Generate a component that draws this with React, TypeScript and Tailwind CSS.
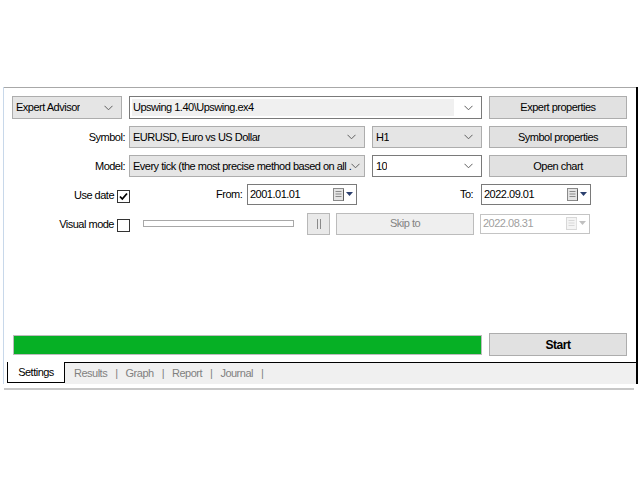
import React from 'react';

const font = "font-['Liberation_Sans',Arial,sans-serif]";

function Chevron() {
  return (
    <svg width="9" height="6" viewBox="0 0 9 6" className="shrink-0">
      <polyline points="0.5,0.8 4.5,4.8 8.5,0.8" fill="none" stroke="#606060" strokeWidth="1" />
    </svg>
  );
}

function CalendarIcon({ disabled }: { disabled?: boolean }) {
  const body = disabled ? '#d8d8d8' : '#8a8a8a';
  const arrow = disabled ? '#c0c0c0' : '#2b3f6e';
  return (
    <svg width="22" height="13" viewBox="0 0 22 13" className="shrink-0">
      <rect x="1.5" y="0.5" width="10" height="12" fill={disabled ? '#f4f4f4' : '#e4e4e4'} stroke={body} />
      <line x1="3.5" y1="3.5" x2="9.5" y2="3.5" stroke={body} />
      <line x1="3.5" y1="6" x2="9.5" y2="6" stroke={body} />
      <line x1="3.5" y1="8.5" x2="9.5" y2="8.5" stroke={body} />
      <line x1="11.5" y1="1.5" x2="11.5" y2="12.5" stroke={disabled ? '#e0e0e0' : '#5a5a5a'} />
      <polygon points="14,4 21,4 17.5,8" fill={arrow} />
    </svg>
  );
}

function Combo({ value, width, white }: { value: string; width: string; white?: boolean }) {
  return (
    <div
      className={`${width} h-full flex items-center justify-between pl-[3px] pr-[8px] border overflow-hidden ${
        white ? 'bg-white border-[#7a7a7a]' : 'bg-[#e5e5e5] border-[#adadad]'
      }`}
    >
      <span className="whitespace-nowrap overflow-hidden">{value}</span>
      <Chevron />
    </div>
  );
}

function Button({ label, width, bold }: { label: string; width: string; bold?: boolean }) {
  return (
    <div className={`${width} h-full flex items-center justify-center bg-[#e1e1e1] border border-[#adadad] ${bold ? 'font-bold text-[12px]' : ''}`}>
      {label}
    </div>
  );
}

function DateField({ value, disabled }: { value: string; disabled?: boolean }) {
  return (
    <div
      className={`w-[110px] h-full flex items-center justify-between pl-[2px] pr-[2px] bg-white border ${
        disabled ? 'border-[#c4c4c4] text-[#a0a0a0]' : 'border-[#7a7a7a]'
      }`}
    >
      <span>{value}</span>
      <CalendarIcon disabled={disabled} />
    </div>
  );
}

function CheckBox({ checked }: { checked?: boolean }) {
  return (
    <div className="w-[13px] h-[13px] border border-[#333] bg-white flex items-center justify-center">
      {checked && (
        <svg width="9" height="9" viewBox="0 0 9 9">
          <polyline points="1,4.5 3.3,7 8,1.5" fill="none" stroke="#000" strokeWidth="1.8" />
        </svg>
      )}
    </div>
  );
}

const tabs = ['Results', 'Graph', 'Report', 'Journal'];

export default function App() {
  return (
    <div className={`w-[640px] h-[480px] bg-white pt-[87px] pl-[3px] text-[11px] tracking-[-0.5px] text-black ${font}`}>
      <div className="w-[635px] border-l border-l-[#c8d8ea] border-r-2 border-r-black">
        <div className="border-t border-t-[#a8a8a8] pl-[8px] pr-[7px] pt-[8px]">
          {/* row 1 */}
          <div className="flex h-[23px]">
            <Combo value="Expert Advisor" width="w-[110px]" />
            <div className="ml-[7px] w-[353px] h-full flex items-center justify-between bg-white border border-[#7a7a7a] p-[2px] pr-[8px]">
              <div className="flex-1 h-full bg-[#f0f0f0] flex items-center pl-[1px] mr-[10px]">Upswing 1.40\Upswing.ex4</div>
              <Chevron />
            </div>
            <div className="ml-[7px] h-full">
              <Button label="Expert properties" width="w-[138px]" />
            </div>
          </div>

          {/* row 2 */}
          <div className="flex h-[22px] mt-[7px] items-center">
            <div className="w-[117px] text-right pr-[4px]">Symbol:</div>
            <Combo value="EURUSD, Euro vs US Dollar" width="w-[236px]" />
            <div className="ml-[7px] h-full">
              <Combo value="H1" width="w-[110px]" />
            </div>
            <div className="ml-[7px] h-full">
              <Button label="Symbol properties" width="w-[138px]" />
            </div>
          </div>

          {/* row 3 */}
          <div className="flex h-[22px] mt-[7px] items-center">
            <div className="w-[117px] text-right pr-[4px]">Model:</div>
            <div className="w-[236px] h-full flex items-center justify-between pl-[3px] pr-[5px] border bg-[#e5e5e5] border-[#adadad]">
              <span className="whitespace-nowrap">Every tick (the most precise method based on all .</span>
              <Chevron />
            </div>
            <div className="ml-[7px] h-full">
              <Combo value="10" width="w-[110px]" white />
            </div>
            <div className="ml-[7px] h-full">
              <Button label="Open chart" width="w-[138px]" />
            </div>
          </div>

          {/* row 4 */}
          <div className="flex h-[21px] mt-[7px] items-center">
            <div className="w-[104px] text-right pr-[2px] pt-[2px]">Use date</div>
            <div className="ml-[1px] mt-[4px]">
              <CheckBox checked />
            </div>
            <div className="ml-[86px] w-[31px]">From:</div>
            <DateField value="2001.01.01" />
            <div className="ml-[103px] w-[21px]">To:</div>
            <DateField value="2022.09.01" />
          </div>

          {/* row 5 */}
          <div className="flex h-[21px] mt-[8px] items-center">
            <div className="w-[104px] text-right pr-[2px] pt-[2px]">Visual mode</div>
            <div className="ml-[1px] mt-[3px]">
              <CheckBox />
            </div>
            <div className="ml-[13px] w-[151px] h-[7px] border border-[#a8a8a8] bg-white" />
            <div className="ml-[13px] w-[23px] h-[22px] flex items-center justify-center gap-[2px] bg-[#e9e9e9] border border-[#b8b8b8]">
              <div className="w-[1px] h-[10px] bg-[#8a8a8a]" />
              <div className="w-[1px] h-[10px] bg-[#8a8a8a]" />
            </div>
            <div className="ml-[6px] w-[138px] h-[22px] flex items-center justify-center bg-[#efefef] border border-[#bcbcbc] text-[#838383]">
              Skip to
            </div>
            <div className="ml-[6px] h-[20px]">
              <DateField value="2022.08.31" disabled />
            </div>
          </div>

          {/* progress */}
          <div className="flex h-[23px] mt-[99px] items-center">
            <div className="ml-[1px] w-[469px] h-[20px] border border-[#bcbcbc] bg-[#e6e6e6]">
              <div className="h-full w-full bg-[#06b025]" />
            </div>
            <div className="ml-[7px] h-full">
              <Button label="Start" width="w-[138px]" bold />
            </div>
          </div>
        </div>

        {/* tabs */}
        <div className="flex h-[22px] mt-[6px] pl-[3px]">
          <div className="w-[58px] h-[21px] bg-white border-l border-r border-b border-black flex items-center justify-center">
            Settings
          </div>
          <div className="flex-1 h-full bg-[#f0f0f0] border-t border-black flex items-center pl-[9px] text-[#808080]">
            {tabs.map((t) => (
              <div key={t} className="flex items-center">
                <span>{t}</span>
                <span className="mx-[8px]">|</span>
              </div>
            ))}
          </div>
        </div>
      </div>
      <div className="w-[630px] ml-[1px] mt-[4px] h-[2px] bg-[#c8c8c8]" />
    </div>
  );
}
